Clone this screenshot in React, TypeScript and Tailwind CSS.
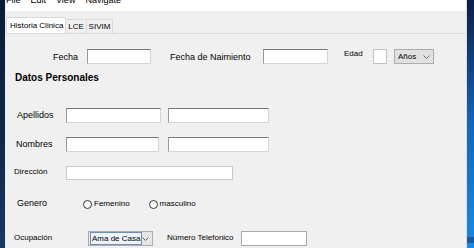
import React from "react";

const font = { fontFamily: '"Liberation Sans", Arial, sans-serif' };

const Field = ({ w, flat }: { w: string; flat?: boolean }) => (
  <div
    className={`${w} h-[15px] bg-white border ${
      flat ? "border-[#c2c2c2]" : "border-[#d4d4d4] border-t-[#777777] border-l-[#9a9a9a]"
    }`}
  />
);

const Chevron = () => (
  <svg width="7" height="4" viewBox="0 0 7 4" className="shrink-0">
    <polyline points="0.5,0.5 3.5,3.5 6.5,0.5" fill="none" stroke="#666" strokeWidth="1" />
  </svg>
);

const Radio = ({ label }: { label: string }) => (
  <div className="flex items-center">
    <div className="w-[9px] h-[9px] rounded-full border border-[#333] bg-white" />
    <span className="ml-[2px] text-[8px]">{label}</span>
  </div>
);

export default function App() {
  return (
    <div className="w-[474px] h-[248px] flex overflow-hidden text-black whitespace-nowrap" style={font}>
      {/* desktop edge left */}
      <div className="w-[5px] h-full bg-gradient-to-b from-[#0a1c38] via-[#0e2747] to-[#163a63]" />

      {/* window */}
      <div className="w-[462px] h-full flex flex-col bg-[#f0f0f0] border-l border-[#e8edf3] border-r border-r-[#dcdcdc]">
        {/* MENU */}
        <div className="h-[11px] bg-white overflow-hidden shrink-0">
          <div className="flex text-[9px] leading-[9px] -mt-[4px] gap-[10px]">
            <span>File</span>
            <span>Edit</span>
            <span>View</span>
            <span>Navigate</span>
          </div>
        </div>

        {/* TABS */}
        <div className="h-[22px] flex items-end shrink-0 text-[8px]">
          <div className="w-[60px] h-[16px] bg-white border border-b-0 border-[#d9d9d9] flex items-center pl-[3px]">
            Historia Clinica
          </div>
          <div className="w-[21px] h-[14px] border border-b-0 border-l-0 border-[#d9d9d9] bg-[#f0f0f0] flex items-center justify-center">
            LCE
          </div>
          <div className="w-[26px] h-[14px] border border-b-0 border-l-0 border-[#d9d9d9] bg-[#f0f0f0] flex items-center justify-center">
            SIVIM
          </div>
        </div>

        {/* PANEL */}
        <div className="flex-1 border-t border-[#d9d9d9] flex flex-col">
          {/* fecha row */}
          <div className="flex items-center mt-[15px] h-[15px] text-[9px]">
            <span className="ml-[47px] w-[34px] mt-[2px]">Fecha</span>
            <Field w="w-[64px]" />
            <span className="ml-[19px] w-[93px] mt-[2px]">Fecha de Naimiento</span>
            <Field w="w-[65px]" />
            <span className="ml-[16px] w-[29px] self-start -mt-[1px] text-[8px]">Edad</span>
            <Field w="w-[14px]" flat />
            <div className="ml-[7px] w-[40px] h-[15px] bg-[#e1e1e1] border border-[#adadad] flex items-center justify-between px-[3px] text-[8px]">
              <span>Años</span>
              <Chevron />
            </div>
          </div>

          <div className="ml-[9px] mt-[8px] text-[10px] leading-[12px] font-bold">Datos Personales</div>

          {/* apellidos */}
          <div className="flex items-center mt-[24px] h-[15px] text-[9px]">
            <span className="ml-[11px] w-[49px] mt-[1px]">Apellidos</span>
            <Field w="w-[95px]" />
            <div className="ml-[7px]">
              <Field w="w-[101px]" />
            </div>
          </div>

          {/* nombres */}
          <div className="flex items-center mt-[14px] h-[15px] text-[9px]">
            <span className="ml-[10px] w-[50px] mt-[1px]">Nombres</span>
            <Field w="w-[93px]" />
            <div className="ml-[9px]">
              <Field w="w-[101px]" />
            </div>
          </div>

          {/* direccion */}
          <div className="flex items-center mt-[14px] h-[14px] text-[8px]">
            <span className="ml-[8px] w-[52px] -mt-[3px]">Dirección</span>
            <div className="w-[167px] h-[14px] bg-white border border-[#c8c8c8]" />
          </div>

          {/* genero */}
          <div className="flex items-center mt-[18px] h-[12px]">
            <span className="ml-[11px] w-[66px] text-[9px]">Genero</span>
            <Radio label="Femenino" />
            <div className="ml-[19px]">
              <Radio label="masculino" />
            </div>
          </div>

          {/* ocupacion */}
          <div className="flex items-center mt-[21px] h-[15px] text-[8px]">
            <span className="ml-[8px] w-[74px] -mt-[1px]">Ocupación</span>
            <div className="w-[65px] h-[15px] bg-[#e5e5e5] border border-[#adadad] flex items-center justify-between pr-[4px]">
              <span className="ml-[1px] px-[1px] leading-[11px] border border-[#6b8fbf] bg-[#eef3fa]">Ama de Casa</span>
              <Chevron />
            </div>
            <span className="ml-[14px] w-[74px] -mt-[1px]">Número Telefonico</span>
            <div className="w-[66px] h-[15px] bg-white border border-[#a9a9a9]" />
          </div>
        </div>
      </div>

      {/* desktop edge right */}
      <div className="w-[7px] h-full flex flex-col bg-gradient-to-b from-[#0d1f44] via-[#1466b8] to-[#1b8ae0]">
        <div className="flex-1" />
        <div className="h-[6px] bg-[#1a5a9c] mb-[5px]" />
      </div>
    </div>
  );
}
